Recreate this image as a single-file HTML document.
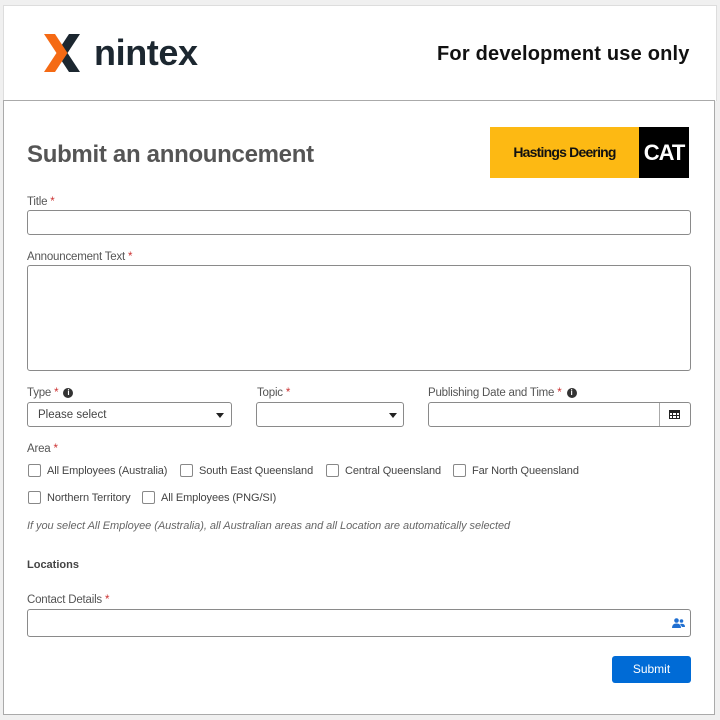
<!DOCTYPE html>
<html><head><style>
*{box-sizing:border-box;margin:0;padding:0}
body{width:720px;height:720px;background:#f0f0f0;font-family:"Liberation Sans",sans-serif;position:relative;overflow:hidden;color:#555}
.hdr{position:absolute;left:3px;top:5px;width:714px;height:96px;background:#fff;border:1px solid #ddd;border-bottom:none}
.card{position:absolute;left:3px;top:100px;width:712px;height:615px;background:#fff;border:1px solid #aaa}
.a{position:absolute}
.lbl{position:absolute;font-size:11.5px;color:#555;letter-spacing:-0.2px}
.req{color:#c33}
.inp{position:absolute;border:1px solid #8a8a8a;border-radius:3px;background:#fff}
.cb{position:absolute;width:13px;height:13px;border:1px solid #888;border-radius:2px;background:#fff}
.ct{position:absolute;font-size:11px;color:#444;letter-spacing:-0.1px}
.info{display:inline-block;width:10px;height:10px;border-radius:50%;background:#333;color:#fff;font-size:8px;font-weight:bold;text-align:center;line-height:10px;vertical-align:1px;margin-left:5px}
.arr{position:absolute;width:0;height:0;border-left:4px solid transparent;border-right:4px solid transparent;border-top:5px solid #222}
</style></head><body>
<div class="hdr">
<svg class="a" style="left:38px;top:27px" width="40" height="40" viewBox="0 0 40 40">
<polygon points="27,1 38,1 25.5,20 14.5,20" fill="#1c2730"/>
<polygon points="14.5,20 25.5,20 38,39 27,39" fill="#1c2730"/>
<polygon points="2,1 13,1 25.5,20 14.5,20" fill="#f56a14"/>
<polygon points="14.5,20 25.5,20 13,39 2,39" fill="#f56a14"/>
</svg>
<div class="a" style="left:90px;top:26px;font-size:36px;font-weight:bold;color:#1c2730;letter-spacing:-0.4px">nintex</div>
<div class="a" style="left:433px;top:37px;font-size:20px;font-weight:bold;color:#111;letter-spacing:0.2px">For development use only</div>
</div>
<div class="card">
<div class="a" style="left:23px;top:40px;font-size:24px;font-weight:bold;color:#555;letter-spacing:-0.3px">Submit an announcement</div>
<div class="a" style="left:486px;top:26px;width:149px;height:51px;background:#fdb913;font-size:14px;font-weight:bold;color:#111;line-height:51px;text-align:center;letter-spacing:-0.8px">Hastings Deering</div>
<div class="a" style="left:635px;top:26px;width:50px;height:51px;background:#000;color:#fff;font-size:22px;font-weight:bold;line-height:51px;text-align:center;letter-spacing:-1px">CAT</div>
<div class="lbl" style="left:23px;top:95px">Title <span class="req">*</span></div>
<div class="inp" style="left:23px;top:109px;width:664px;height:25px"></div>
<div class="lbl" style="left:23px;top:150px">Announcement Text <span class="req">*</span></div>
<div class="inp" style="left:23px;top:164px;width:664px;height:106px"></div>
<div class="lbl" style="left:23px;top:286px">Type <span class="req">*</span><span class="info">i</span></div>
<div class="inp" style="left:23px;top:301px;width:205px;height:25px"><span style="position:absolute;left:10px;top:6px;font-size:11.5px;color:#444">Please select</span><div class="arr" style="left:188px;top:10px"></div></div>
<div class="lbl" style="left:253px;top:286px">Topic <span class="req">*</span></div>
<div class="inp" style="left:252px;top:301px;width:148px;height:25px"><div class="arr" style="left:132px;top:10px"></div></div>
<div class="lbl" style="left:424px;top:286px">Publishing Date and Time <span class="req">*</span><span class="info">i</span></div>
<div class="inp" style="left:424px;top:301px;width:263px;height:25px"><div class="a" style="left:230px;top:0;width:1px;height:23px;background:#aaa"></div>
<svg class="a" style="left:240px;top:7px" width="11" height="9"><rect x="0.5" y="0.5" width="10" height="8" fill="#fff" stroke="#222"/><rect x="0" y="0" width="11" height="3" fill="#222"/><line x1="3.5" y1="3" x2="3.5" y2="9" stroke="#222"/><line x1="7.5" y1="3" x2="7.5" y2="9" stroke="#222"/><line x1="0" y1="5.5" x2="11" y2="5.5" stroke="#222"/></svg></div>
<div class="lbl" style="left:23px;top:342px">Area <span class="req">*</span></div>
<div class="cb" style="left:24px;top:363px"></div><div class="ct" style="left:43px;top:364px">All Employees (Australia)</div>
<div class="cb" style="left:176px;top:363px"></div><div class="ct" style="left:195px;top:364px">South East Queensland</div>
<div class="cb" style="left:322px;top:363px"></div><div class="ct" style="left:341px;top:364px">Central Queensland</div>
<div class="cb" style="left:449px;top:363px"></div><div class="ct" style="left:468px;top:364px">Far North Queensland</div>
<div class="cb" style="left:24px;top:390px"></div><div class="ct" style="left:43px;top:391px">Northern Territory</div>
<div class="cb" style="left:138px;top:390px"></div><div class="ct" style="left:157px;top:391px">All Employees (PNG/SI)</div>
<div class="a" style="left:23px;top:419px;font-size:11px;font-style:italic;color:#666;letter-spacing:-0.05px">If you select All Employee (Australia), all Australian areas and all Location are automatically selected</div>
<div class="a" style="left:23px;top:458px;font-size:11px;font-weight:bold;color:#444">Locations</div>
<div class="lbl" style="left:23px;top:493px">Contact Details <span class="req">*</span></div>
<div class="inp" style="left:23px;top:508px;width:664px;height:28px">
<svg class="a" style="left:644px;top:8px" width="13" height="10" viewBox="0 0 13 10"><circle cx="4.5" cy="2.5" r="2.3" fill="#1f6fd1"/><path d="M0 10 Q0 5.5 4.5 5.5 Q9 5.5 9 10Z" fill="#1f6fd1"/><circle cx="9.5" cy="3" r="1.8" fill="#1f6fd1"/><path d="M8 6 Q13 5 13 9 L10 9Z" fill="#1f6fd1"/></svg></div>
<div class="a" style="left:608px;top:555px;width:79px;height:27px;background:#006bd6;border-radius:3px;color:#fff;font-size:12px;text-align:center;line-height:27px">Submit</div>
</div>
</body></html>
